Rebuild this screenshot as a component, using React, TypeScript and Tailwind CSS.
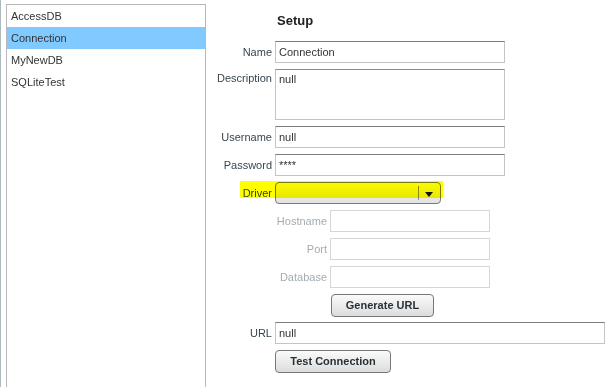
import { useState } from 'react';

const items = ['AccessDB', 'Connection', 'MyNewDB', 'SQLiteTest'];

function Field({ label, value, disabled, size = 'md' }: { label: string; value?: string; disabled?: boolean; size?: 'sm' | 'md' | 'lg' }) {
  const width = size === 'sm' ? 'w-[160px]' : size === 'lg' ? 'w-[330px]' : 'w-[230px]';
  return (
    <div className="flex h-[22px] items-center">
      <div className={`w-[69px] pr-[3px] text-right ${disabled ? 'text-[#a3acb0]' : 'text-[#37474f]'}`}>{label}</div>
      <div
        className={`h-[22px] flex items-center px-[3px] bg-white border ${
          disabled ? 'border-[#d6d6d6]' : 'border-[#c4c4c4] border-t-[#7c7c7c]'
        } ${width} text-[#333]`}
      >
        {value}
      </div>
    </div>
  );
}

export default function App() {
  const [selected, setSelected] = useState(1);

  return (
    <div
      className="relative w-[613px] h-[387px] overflow-hidden bg-white flex text-[11px]"
      style={{ fontFamily: '"Liberation Sans", Arial, sans-serif' }}
    >
      {/* Left edge */}
      <div className="w-px bg-[#b0b9bd]" />

      {/* Connection list */}
      <div className="ml-[5px] mt-[4px] w-[200px] h-[400px] border border-[#b8b8b8] bg-white">
        {items.map((it, i) => (
          <div
            key={it}
            onClick={() => setSelected(i)}
            className={`h-[22px] flex items-center pl-[4px] text-[#333] ${i === selected ? 'bg-[#80caff]' : ''}`}
          >
            {it}
          </div>
        ))}
      </div>

      {/* Setup form */}
      <div className="flex flex-col pt-[13px]">
        <div className="h-4 leading-4 ml-[71px] mb-[12px] text-[13px] font-bold text-[#222]">Setup</div>

        <div className="flex flex-col gap-[6px]">
          <Field label="Name" value="Connection" />

          <div className="flex h-[51px]">
            <div className="w-[69px] pr-[3px] pt-[1px] text-right text-[#37474f]">Description</div>
            <div className="w-[230px] h-[51px] px-[3px] pt-[1px] bg-white border border-[#c4c4c4] border-t-[#8c8c8c] text-[#333]">
              null
            </div>
          </div>

          <Field label="Username" value="null" />
          <Field label="Password" value="****" />

          <div className="flex h-[22px] items-center">
            <div className="w-[69px] pr-[3px] text-right text-[#37474f]">Driver</div>
            <div className="w-[166px] h-[22px] rounded-[4px] border border-[#7a7a7a] bg-gradient-to-b from-[#fafafa] to-[#e2e2e2] flex items-center justify-end">
              <div className="h-[14px] w-px bg-[#8a8a8a] mr-[6px]" />
              <svg width="8" height="5" viewBox="0 0 8 5" className="mr-[7px] mt-[2px]">
                <path d="M0 0 L8 0 L4 5 Z" fill="#111" />
              </svg>
            </div>
          </div>

          <div className="flex flex-col gap-[6px] ml-[55px]">
            <Field label="Hostname" disabled size="sm" />
            <Field label="Port" disabled size="sm" />
            <Field label="Database" disabled size="sm" />
            <div className="flex h-[22px]">
              <div className="w-[70px]" />
              <button className="w-[103px] h-[23px] rounded-[4px] border border-[#777] bg-gradient-to-b from-[#fbfbfb] to-[#dcdcdc] font-bold text-[#263238]">
                Generate URL
              </button>
            </div>
          </div>

          <Field label="URL" value="null" size="lg" />

          <div className="flex h-[22px]">
            <div className="w-[69px]" />
            <button className="w-[116px] h-[23px] rounded-[4px] border border-[#777] bg-gradient-to-b from-[#fbfbfb] to-[#dcdcdc] font-bold text-[#263238]">
              Test Connection
            </button>
          </div>
        </div>
      </div>

      {/* Highlighter mark */}
      <div className="absolute left-[240px] top-[181px] w-[203px] h-[17px] bg-[#ffff00] mix-blend-multiply pointer-events-none" />
    </div>
  );
}
